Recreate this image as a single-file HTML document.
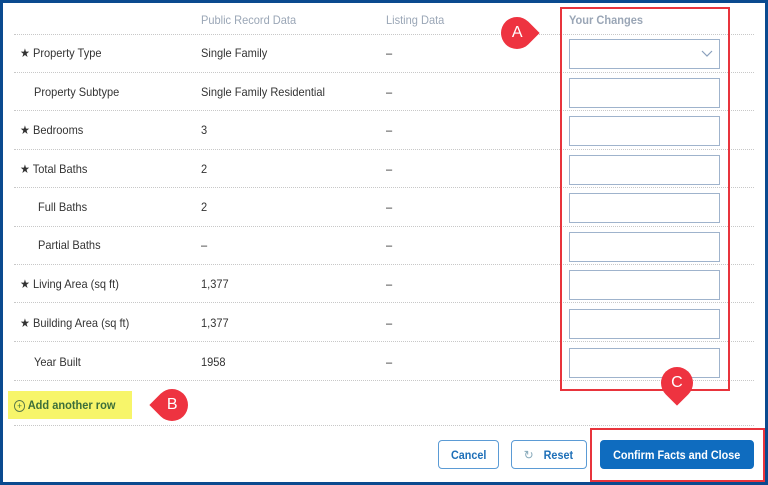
<!DOCTYPE html><html><head><style>
body{margin:0;width:768px;height:485px;overflow:hidden;background:#fff;font-family:"Liberation Sans",sans-serif;font-size:12px;color:#333}
.frame{position:absolute;left:0;top:0;width:762px;height:479px;border:3px solid #0a4a8f}
.t{position:absolute;white-space:nowrap;transform:scaleX(.92);transform-origin:left center}
.hd{color:#9aa6b6;font-size:12px}
.ln{position:absolute;left:14px;width:740px;border-top:1px dotted #c8c8c8;height:0}
.in{position:absolute;left:569px;width:149px;height:28px;border:1px solid #9fb3cc;background:#fff}
.red{position:absolute;border:2px solid #e8343c}
.btn{position:absolute;border:1.5px solid #5b9bd5;border-radius:4px;color:#1d6fb8;font-weight:bold;display:flex;align-items:center;justify-content:center;background:#fff}
.btn span.s{display:inline-block;transform:scaleX(.9)}
.pin{position:absolute;width:32px;height:32px;background:#ee3340;color:#fff;font-size:16px;display:flex;align-items:center;justify-content:center}
</style></head><body>
<div class="frame"></div>
<div class="t hd" style="left:201px;top:13px">Public Record Data</div>
<div class="t hd" style="left:386px;top:13px">Listing Data</div>
<div class="t hd" style="left:569px;top:13px;font-weight:bold">Your Changes</div>
<div class="ln" style="top:34px"></div><div class="ln" style="top:72px"></div><div class="ln" style="top:110px"></div><div class="ln" style="top:149px"></div><div class="ln" style="top:187px"></div><div class="ln" style="top:226px"></div><div class="ln" style="top:264px"></div><div class="ln" style="top:302px"></div><div class="ln" style="top:341px"></div><div class="ln" style="top:380px"></div><div class="ln" style="top:425px"></div>
<div class="t" style="left:20px;top:46px">★ Property Type</div><div class="t" style="left:201px;top:46px">Single Family</div><div class="t" style="left:386px;top:46px">–</div>
<div class="t" style="left:34px;top:85px">Property Subtype</div><div class="t" style="left:201px;top:85px">Single Family Residential</div><div class="t" style="left:386px;top:85px">–</div>
<div class="t" style="left:20px;top:123px">★ Bedrooms</div><div class="t" style="left:201px;top:123px">3</div><div class="t" style="left:386px;top:123px">–</div>
<div class="t" style="left:20px;top:162px">★ Total Baths</div><div class="t" style="left:201px;top:162px">2</div><div class="t" style="left:386px;top:162px">–</div>
<div class="t" style="left:38px;top:200px">Full Baths</div><div class="t" style="left:201px;top:200px">2</div><div class="t" style="left:386px;top:200px">–</div>
<div class="t" style="left:38px;top:238px">Partial Baths</div><div class="t" style="left:201px;top:238px">–</div><div class="t" style="left:386px;top:238px">–</div>
<div class="t" style="left:20px;top:277px">★ Living Area (sq ft)</div><div class="t" style="left:201px;top:277px">1,377</div><div class="t" style="left:386px;top:277px">–</div>
<div class="t" style="left:20px;top:316px">★ Building Area (sq ft)</div><div class="t" style="left:201px;top:316px">1,377</div><div class="t" style="left:386px;top:316px">–</div>
<div class="t" style="left:34px;top:355px">Year Built</div><div class="t" style="left:201px;top:355px">1958</div><div class="t" style="left:386px;top:355px">–</div>
<div class="in" style="top:39px"><svg style="position:absolute;right:6px;top:10px" width="12" height="8"><path d="M1 1l5 5 5-5" fill="none" stroke="#8aa0bd" stroke-width="1.2"/></svg></div>
<div class="in" style="top:78px"></div><div class="in" style="top:116px"></div><div class="in" style="top:155px"></div><div class="in" style="top:193px"></div><div class="in" style="top:232px"></div><div class="in" style="top:270px"></div><div class="in" style="top:309px"></div><div class="in" style="top:348px"></div>
<div class="red" style="left:560px;top:7px;width:166px;height:380px"></div>
<div style="position:absolute;left:8px;top:391px;width:124px;height:28px;background:#f7f56a"></div>
<div class="t" style="left:14px;top:398px;color:#3c6e3a;font-weight:bold"><span style="display:inline-block;width:10px;height:10px;border:1px solid #5a7a4a;border-radius:50%;font-size:9px;line-height:10px;text-align:center;font-weight:normal">+</span> Add another row</div>
<div class="btn" style="left:438px;top:440px;width:59px;height:27px"><span class="s">Cancel</span></div>
<div class="btn" style="left:511px;top:440px;width:74px;height:27px"><span style="color:#8ab;font-weight:normal;margin-right:8px">↻</span><span class="s">Reset</span></div>
<div class="btn" style="left:600px;top:440px;width:152px;height:27px;background:#0f6cbf;color:#fff;border-color:#0f6cbf"><span class="s">Confirm Facts and Close</span></div>
<div class="red" style="left:590px;top:428px;width:171px;height:50px"></div>
<div class="pin" style="left:501px;top:17px;border-radius:50% 0 50% 50%;transform:rotate(45deg)"><span style="transform:rotate(-45deg)">A</span></div>
<div class="pin" style="left:156px;top:389px;border-radius:50% 50% 50% 0;transform:rotate(45deg)"><span style="transform:rotate(-45deg)">B</span></div>
<div class="pin" style="left:661px;top:367px;border-radius:50% 50% 0 50%;transform:rotate(45deg)"><span style="transform:rotate(-45deg)">C</span></div>
</body></html>
